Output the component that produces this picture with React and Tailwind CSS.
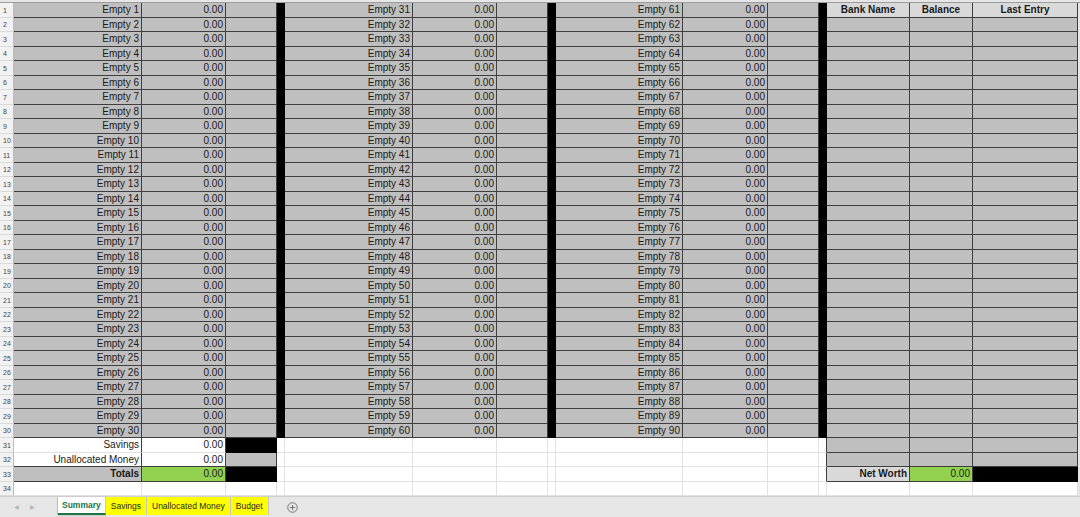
import React from 'react';

const S = {
  gray: 'bg-[#bfbfbf] border-r border-b border-[#3f3f3f]',
  white: 'bg-white border-r border-b border-[#e1e1e1]',
  black: 'bg-black border-r border-b border-black',
  head: 'bg-[#d9d9d9] border-r border-b border-[#3f3f3f] font-bold justify-center',
  green: 'bg-[#92d050] border-r border-b border-[#3f3f3f] justify-end',
  light: 'bg-[#d9d9d9] border-r border-b border-[#3f3f3f] font-bold justify-end',
  wR: 'bg-white border-r border-b border-[#3f3f3f] border-b-[#e1e1e1]',
  wRB: 'bg-white border-r border-b border-[#3f3f3f]',
  filler: 'bg-[#e6e6e6] border-b border-[#e6e6e6]',
};

// section starts: A=1, E=5, I=9
const sectionOf = { 1: 0, 2: 0, 3: 0, 5: 1, 6: 1, 7: 1, 9: 2, 10: 2, 11: 2 };

function getCell(r, c) {
  if (c === 16) return { cls: S.filler };
  if (r <= 30) {
    if (c === 4 || c === 8 || c === 12) return { cls: S.black };
    if (c === 13 || c === 14 || c === 15) {
      if (r === 1) return { cls: S.head, text: ['Bank Name', 'Balance', 'Last Entry'][c - 13] };
      return { cls: S.gray };
    }
    const pos = (c - 1) % 4;
    const n = r + sectionOf[c] * 30;
    if (pos === 0) return { cls: S.gray + ' justify-end', text: `Empty ${n}` };
    if (pos === 1) return { cls: S.gray + ' justify-end', text: '0.00' };
    return { cls: S.gray };
  }
  if (r === 34) return { cls: S.white };
  // rows 31 - 33
  if (c === 1) {
    if (r === 31) return { cls: S.wR + ' justify-end', text: 'Savings' };
    if (r === 32) return { cls: S.wRB + ' justify-end', text: 'Unallocated Money' };
    return { cls: S.gray + ' justify-end font-bold', text: 'Totals' };
  }
  if (c === 2) {
    if (r === 31) return { cls: S.wR + ' justify-end', text: '0.00' };
    if (r === 32) return { cls: S.wRB + ' justify-end', text: '0.00' };
    return { cls: S.green, text: '0.00' };
  }
  if (c === 3) return { cls: r === 32 ? S.gray : S.black };
  if (c === 12) return { cls: S.wR };
  if (c >= 13) {
    if (r < 33) return { cls: S.gray };
    if (c === 13) return { cls: S.light, text: 'Net Worth' };
    if (c === 14) return { cls: S.green, text: '0.00' };
    return { cls: S.black };
  }
  return { cls: S.white };
}

const rows = Array.from({ length: 34 }, (_, i) => i + 1);
const cols = Array.from({ length: 17 }, (_, i) => i);

const Tab = ({ label, active }) => (
  <div
    className={`flex items-center border-r border-[#c6c6c6] ${
      active
        ? 'px-[4px] bg-white text-[#217346] font-bold border-b-2 border-b-[#217346] shadow-[0_1px_2px_rgba(0,0,0,0.15)]'
        : 'px-[5px] bg-[#ffff00] text-[#262626]'
    }`}
  >
    {label}
  </div>
);

export default function App() {
  return (
    <div
      className="w-[1080px] h-[517px] overflow-hidden bg-white flex flex-col text-[#1a1a1a]"
      style={{ fontFamily: '"Liberation Sans", Arial, sans-serif' }}
    >
      {/* column header strip (scrolled away) */}
      <div className="h-[3px] shrink-0 bg-[#e6e6e6] border-b border-[#9c9c9c]" />

      {/* Sheet grid */}
      <div className="grid grid-cols-[14px_128px_84px_51px_8px_128px_84px_51px_8px_127px_85px_51px_8px_83px_63px_105px_2px] grid-rows-[repeat(34,14.5px)] shrink-0 text-[10px] leading-none">
        {rows.map(r =>
          cols.map(c => {
            if (c === 0) {
              return (
                <div
                  key={`${r}-${c}`}
                  className="bg-[#f2f2f2] border-r border-b border-r-[#bdbdbd] border-b-[#dadada] flex items-center pl-[3px] pt-[1px] text-[7px] text-[#444]"
                >
                  {r}
                </div>
              );
            }
            const cell = getCell(r, c);
            return (
              <div
                key={`${r}-${c}`}
                className={`flex items-center px-[2px] pt-[1px] whitespace-nowrap overflow-hidden ${cell.cls}`}
              >
                {cell.text}
              </div>
            );
          })
        )}
      </div>

      {/* Sheet tabs */}
      <div className="flex-1 flex bg-[#e6e6e6] border-t border-[#cfcfcf] text-[8.5px]">
        <div className="w-[57px] flex items-center gap-[11px] pl-[14px] text-[#b5b5b5] text-[6px]">
          <span>◀</span>
          <span>▶</span>
        </div>
        <div className="flex mb-[2px] border-l border-[#c6c6c6]">
          <Tab label="Summary" active />
          <Tab label="Savings" />
          <Tab label="Unallocated Money" />
          <Tab label="Budget" />
        </div>
        <div className="flex items-center pl-[18px]">
          <svg width="11" height="11" viewBox="0 0 12 12" fill="none" stroke="#6b6b6b" strokeWidth="1">
            <circle cx="6" cy="6" r="5.2" />
            <path d="M6 3.2v5.6M3.2 6h5.6" />
          </svg>
        </div>
      </div>
    </div>
  );
}
